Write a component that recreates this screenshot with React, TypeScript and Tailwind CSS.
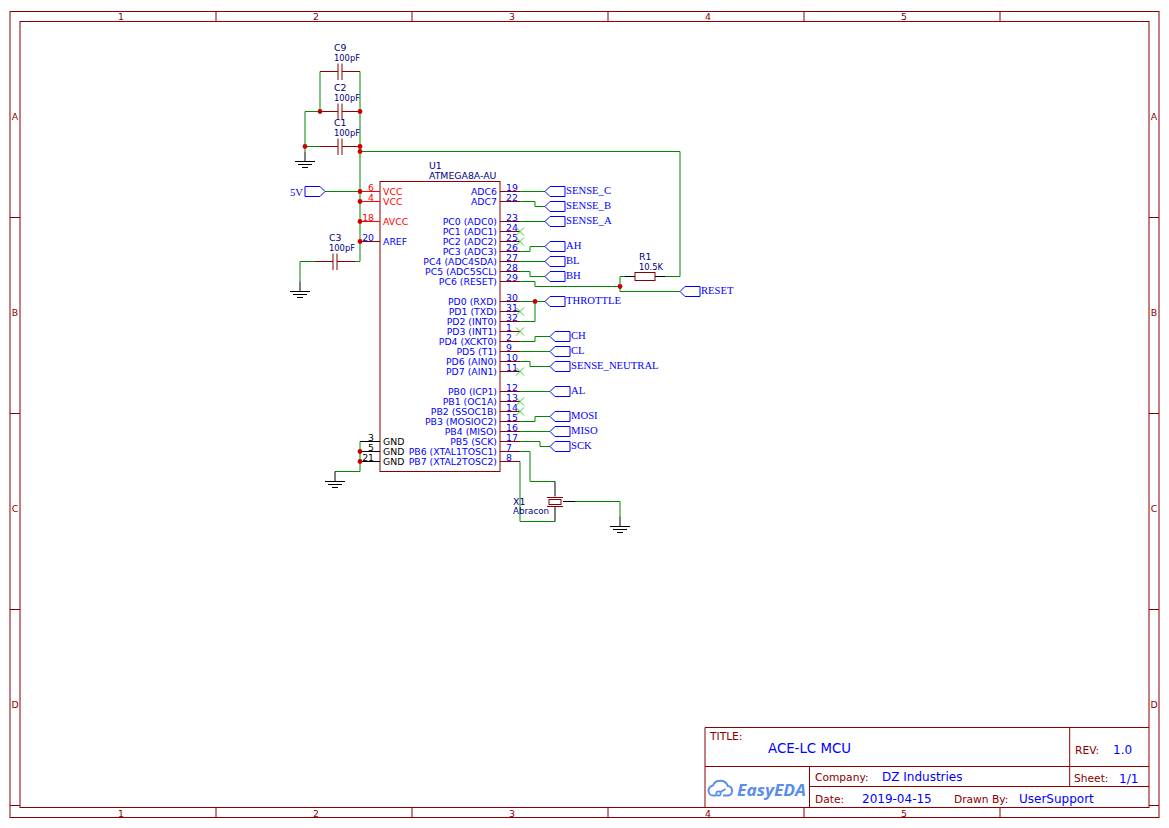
const GREEN = "#008800"
const MAROON = "#880000"
const BLUE = "#0000ff"
const NAVY = "#000080"
const RED = "#ff0000"
const LOGO = "#5b8def"

// wires are polylines: [x, y, x, y, ...]
const wires: number[][] = [
  [320, 111.5, 320, 71.5],
  [320, 111.5, 305, 111.5, 305, 146.5, 320, 146.5],
  [360, 71.5, 360, 261.5, 355, 261.5],
  [360, 151.5, 680, 151.5, 680, 276.5, 665, 276.5],
  [325, 191.5, 360, 191.5],
  [300, 261.5, 315, 261.5],
  [300, 261.5, 300, 281.5],
  [305, 146.5, 305, 151.5],
  [360, 441.5, 360, 471.5, 335, 471.5, 335, 471.5],
  [520, 191.5, 545, 191.5],
  [520, 201.5, 535, 201.5, 535, 206.5, 545, 206.5],
  [520, 221.5, 545, 221.5],
  [520, 251.5, 530, 251.5, 530, 246.5, 545, 246.5],
  [520, 261.5, 545, 261.5],
  [520, 271.5, 530, 271.5, 530, 276.5, 545, 276.5],
  [520, 281.5, 535, 281.5, 535, 286.5, 620, 286.5],
  [620, 276.5, 620, 291.5, 680, 291.5],
  [620, 276.5, 625, 276.5],
  [520, 301.5, 545, 301.5],
  [520, 321.5, 535, 321.5, 535, 301.5],
  [520, 341.5, 535, 341.5, 535, 336.5, 550, 336.5],
  [520, 351.5, 550, 351.5],
  [520, 361.5, 530, 361.5, 530, 366.5, 550, 366.5],
  [520, 391.5, 550, 391.5],
  [520, 421.5, 535, 421.5, 535, 416.5, 550, 416.5],
  [520, 431.5, 550, 431.5],
  [520, 441.5, 540, 441.5, 540, 446.5, 550, 446.5],
  [520, 451.5, 530, 451.5, 530, 481.5, 555, 481.5],
  [520, 461.5, 520, 521.5, 555, 521.5],
  [575, 501.5, 620, 501.5, 620, 516.5],
]

const junctions = [
  [320, 111.5], [360, 111.5], [305, 146.5], [360, 146.5], [360, 151.5],
  [360, 191.5], [360, 201.5], [360, 221.5], [360, 241.5],
  [360, 451.5], [360, 461.5], [620, 286.5], [535, 301.5],
]

const leftPins = [
  { y: 191.5, num: "6", name: "VCC", color: RED },
  { y: 201.5, num: "4", name: "VCC", color: RED },
  { y: 221.5, num: "18", name: "AVCC", color: RED },
  { y: 241.5, num: "20", name: "AREF", color: BLUE, line: MAROON },
  { y: 441.5, num: "3", name: "GND", color: "#000000" },
  { y: 451.5, num: "5", name: "GND", color: "#000000" },
  { y: 461.5, num: "21", name: "GND", color: "#000000" },
]

const rightPins = [
  [191.5, "19", "ADC6"],
  [201.5, "22", "ADC7"],
  [221.5, "23", "PC0 (ADC0)"],
  [231.5, "24", "PC1 (ADC1)"],
  [241.5, "25", "PC2 (ADC2)"],
  [251.5, "26", "PC3 (ADC3)"],
  [261.5, "27", "PC4 (ADC4SDA)"],
  [271.5, "28", "PC5 (ADC5SCL)"],
  [281.5, "29", "PC6 (RESET)"],
  [301.5, "30", "PD0 (RXD)"],
  [311.5, "31", "PD1 (TXD)"],
  [321.5, "32", "PD2 (INT0)"],
  [331.5, "1", "PD3 (INT1)"],
  [341.5, "2", "PD4 (XCKT0)"],
  [351.5, "9", "PD5 (T1)"],
  [361.5, "10", "PD6 (AIN0)"],
  [371.5, "11", "PD7 (AIN1)"],
  [391.5, "12", "PB0 (ICP1)"],
  [401.5, "13", "PB1 (OC1A)"],
  [411.5, "14", "PB2 (SSOC1B)"],
  [421.5, "15", "PB3 (MOSIOC2)"],
  [431.5, "16", "PB4 (MISO)"],
  [441.5, "17", "PB5 (SCK)"],
  [451.5, "7", "PB6 (XTAL1TOSC1)"],
  [461.5, "8", "PB7 (XTAL2TOSC2)"],
] as const

const noConnects = [231.5, 241.5, 311.5, 331.5, 371.5, 401.5, 411.5]

const ports = [
  { tip: 545, y: 191.5, label: "SENSE_C" },
  { tip: 545, y: 206.5, label: "SENSE_B" },
  { tip: 545, y: 221.5, label: "SENSE_A" },
  { tip: 545, y: 246.5, label: "AH" },
  { tip: 545, y: 261.5, label: "BL" },
  { tip: 545, y: 276.5, label: "BH" },
  { tip: 545, y: 301.5, label: "THROTTLE" },
  { tip: 680, y: 291.5, label: "RESET" },
  { tip: 550, y: 336.5, label: "CH" },
  { tip: 550, y: 351.5, label: "CL" },
  { tip: 550, y: 366.5, label: "SENSE_NEUTRAL" },
  { tip: 550, y: 391.5, label: "AL" },
  { tip: 550, y: 416.5, label: "MOSI" },
  { tip: 550, y: 431.5, label: "MISO" },
  { tip: 550, y: 446.5, label: "SCK" },
]

const caps = [
  { x: 340, y: 71.5, name: "C9", from: 320, to: 360, ly: 51, lx: 334 },
  { x: 340, y: 111.5, name: "C2", from: 320, to: 360, ly: 91, lx: 334 },
  { x: 340, y: 146.5, name: "C1", from: 320, to: 360, ly: 126, lx: 334 },
  { x: 335, y: 261.5, name: "C3", from: 315, to: 355, ly: 241, lx: 329 },
]

const grounds = [
  { x: 305, top: 151.5 },
  { x: 300, top: 281.5 },
  { x: 335, top: 471.5 },
  { x: 620, top: 516.5 },
]

const xTicks = [216, 412, 608, 804, 1000]
const yTicks = [217.5, 413.5, 609.5, 805.5]
const colLabels = [[121, "1"], [316, "2"], [512, "3"], [708, "4"], [904, "5"]] as const
const rowLabels = [[120, "A"], [316, "B"], [512, "C"], [708, "D"]] as const

function Ground({ x, top }: { x: number; top: number }) {
  const y = top + 10
  return (
    <g>
      <line x1={x} y1={top} x2={x} y2={y} stroke="#000000" />
      <line x1={x - 10} y1={y} x2={x + 10} y2={y} stroke="#000000" />
      <line x1={x - 7} y1={y + 3} x2={x + 7} y2={y + 3} stroke="#000000" />
      <line x1={x - 3} y1={y + 6} x2={x + 3} y2={y + 6} stroke="#000000" />
    </g>
  )
}

function Capacitor({ x, y, from, to }: { x: number; y: number; from: number; to: number }) {
  return (
    <g stroke={MAROON}>
      <line x1={from} y1={y} x2={x - 2} y2={y} />
      <line x1={x + 2} y1={y} x2={to} y2={y} />
      <line x1={x - 2} y1={y - 8} x2={x - 2} y2={y + 8.5} />
      <line x1={x + 2} y1={y - 8} x2={x + 2} y2={y + 8.5} />
    </g>
  )
}

function EasyEdaLogo() {
  return (
    <g>
      <path
        d="M714 795.5a5 5 0 0 1-1-10c1.2-3.2 4.2-4.8 7.5-4.8c3.6 0 6.2 2.2 7.2 5.2a4.9 4.9 0 0 1 .8 9.6h-5.5"
        fill="none"
        stroke={LOGO}
        strokeWidth="2"
      />
      <path d="M714 795.5h2.5M720.5 792l5-3" fill="none" stroke={LOGO} strokeWidth="2" />
      <circle cx="718.5" cy="793.5" r="2.2" fill="none" stroke={LOGO} strokeWidth="1.7" />
      <text
        x="737"
        y="796"
        fill={LOGO}
        textLength={69}
        lengthAdjust="spacingAndGlyphs"
        className="font-['Open_Sans',sans-serif] text-[15.5px] font-bold italic"
      >
        EasyEDA
      </text>
    </g>
  )
}

export default function App() {
  return (
    <div className="h-[828px] w-[1169px] overflow-hidden bg-white">
      <svg
        width="1169"
        height="828"
        viewBox="0 0 1169 828"
        fill="none"
        className="block font-['DejaVu_Sans',sans-serif]"
      >
        {/* sheet frame */}
        <g stroke={MAROON}>
          <rect x="10" y="11.5" width="1149" height="806" />
          <rect x="20" y="21.5" width="1129" height="786" />
          {xTicks.map((x) => (
            <g key={x}>
              <line x1={x} y1="11.5" x2={x} y2="21.5" />
              <line x1={x} y1="807.5" x2={x} y2="817.5" />
            </g>
          ))}
          {yTicks.map((y) => (
            <g key={y}>
              <line x1="10" y1={y} x2="20" y2={y} />
              <line x1="1149" y1={y} x2="1159" y2={y} />
            </g>
          ))}
        </g>
        <g fill={MAROON} textAnchor="middle" className="text-[9.33px]">
          {colLabels.map(([x, t]) => (
            <g key={t}>
              <text x={x} y="20">{t}</text>
              <text x={x} y="816.5">{t}</text>
            </g>
          ))}
          {rowLabels.map(([y, t]) => (
            <g key={t}>
              <text x="15" y={y}>{t}</text>
              <text x="1154" y={y}>{t}</text>
            </g>
          ))}
        </g>

        {/* title block */}
        <g stroke={MAROON}>
          <line x1="705" y1="727.5" x2="1149" y2="727.5" />
          <line x1="705" y1="727.5" x2="705" y2="807.5" />
          <line x1="705" y1="766.5" x2="1149" y2="766.5" />
          <line x1="809.5" y1="786.5" x2="1149" y2="786.5" />
          <line x1="809.5" y1="766.5" x2="809.5" y2="807.5" />
          <line x1="1069.7" y1="727.5" x2="1069.7" y2="786.5" />
        </g>
        <g fill={MAROON} className="text-[10.67px]">
          <text x="710" y="740">TITLE:</text>
          <text x="1075" y="754">REV:</text>
          <text x="815" y="781">Company:</text>
          <text x="815" y="803">Date:</text>
          <text x="954" y="803">Drawn By:</text>
          <text x="1074" y="782">Sheet:</text>
        </g>
        <g fill={BLUE} className="text-[12px]">
          <text x="768" y="753" className="text-[13.33px]">ACE-LC MCU</text>
          <text x="1113" y="754">1.0</text>
          <text x="882" y="781">DZ Industries</text>
          <text x="862" y="803">2019-04-15</text>
          <text x="1019" y="803">UserSupport</text>
          <text x="1119" y="783">1/1</text>
        </g>
        <EasyEdaLogo />

        {/* wires */}
        <g stroke={GREEN}>
          {wires.map((w, i) => (
            <polyline key={i} points={w.join(" ")} />
          ))}
        </g>

        {caps.map((c) => (
          <g key={c.name}>
            <Capacitor x={c.x} y={c.y} from={c.from} to={c.to} />
            <text x={c.lx} y={c.ly} fill={NAVY} className="text-[9.33px]">{c.name}</text>
            <text x={c.lx} y={c.ly + 10} fill={NAVY} textLength={26} lengthAdjust="spacingAndGlyphs" className="text-[9.33px]">100pF</text>
          </g>
        ))}

        {grounds.map((g) => (
          <Ground key={g.x} x={g.x} top={g.top} />
        ))}

        {/* U1 */}
        <rect x="380" y="181.5" width="120" height="290" stroke={MAROON} />
        <text x="429" y="169" fill={NAVY} className="text-[9.33px]">U1</text>
        <text x="429" y="179" fill={NAVY} className="text-[9.33px]">ATMEGA8A-AU</text>
        {leftPins.map((p) => (
          <g key={p.num}>
            <line x1="360" y1={p.y} x2="380" y2={p.y} stroke={p.line ?? p.color} />
            <text x="374" y={p.y - 1} textAnchor="end" fill={p.color} className="text-[9.33px]">{p.num}</text>
            <text x="383" y={p.y + 3} fill={p.color} className="text-[9.33px]">{p.name}</text>
          </g>
        ))}
        {rightPins.map(([y, num, name]) => (
          <g key={num}>
            <line x1="500" y1={y} x2="520" y2={y} stroke={MAROON} />
            <text x="506" y={y - 1} fill={BLUE} className="text-[9.33px]">{num}</text>
            <text x="497" y={y + 3} textAnchor="end" fill={BLUE} className="text-[9.33px]">{name}</text>
          </g>
        ))}
        <g stroke="#33cc33">
          {noConnects.map((y) => (
            <g key={y}>
              <line x1="516" y1={y - 4} x2="524" y2={y + 4} />
              <line x1="516" y1={y + 4} x2="524" y2={y - 4} />
            </g>
          ))}
        </g>

        {/* net ports */}
        <path d="M305 186.5h15l5 5l-5 5h-15z" stroke={BLUE} />
        <text x="303" y="195.5" textAnchor="end" fill={BLUE} className="font-['Liberation_Serif',serif] text-[10.67px]">5V</text>
        {ports.map((p) => (
          <g key={p.label}>
            <path d={`M${p.tip} ${p.y}l5 -5h15v10h-15z`} stroke={BLUE} />
            <text x={p.tip + 21} y={p.y + 2} fill={BLUE} className="font-['Liberation_Serif',serif] text-[10.67px]">{p.label}</text>
          </g>
        ))}

        {/* R1 */}
        <line x1="625" y1="276.5" x2="635" y2="276.5" stroke="#000000" />
        <line x1="655" y1="276.5" x2="665" y2="276.5" stroke="#000000" />
        <rect x="635" y="272.5" width="20" height="8" stroke={MAROON} />
        <text x="639" y="260" fill={NAVY} className="text-[9.33px]">R1</text>
        <text x="639" y="270" fill={NAVY} textLength={24} lengthAdjust="spacingAndGlyphs" className="text-[9.33px]">10.5K</text>

        {/* X1 */}
        <line x1="555" y1="481.5" x2="555" y2="496.5" stroke="#000000" />
        <line x1="555" y1="506.5" x2="555" y2="521.5" stroke="#000000" />
        <line x1="563" y1="501.5" x2="575" y2="501.5" stroke="#000000" />
        <line x1="547" y1="497.5" x2="563" y2="497.5" stroke={MAROON} />
        <rect x="549" y="499.5" width="12" height="5" stroke={MAROON} />
        <line x1="547" y1="506.5" x2="563" y2="506.5" stroke={MAROON} />
        <text x="513" y="505" fill={NAVY} className="text-[9.33px]">X1</text>
        <text x="513" y="514" fill={NAVY} textLength={36} lengthAdjust="spacingAndGlyphs" className="text-[9.33px]">Abracon</text>

        {junctions.map(([x, y]) => (
          <circle key={`${x}-${y}`} cx={x} cy={y} r="2.4" fill="#cc0000" />
        ))}
      </svg>
    </div>
  )
}
